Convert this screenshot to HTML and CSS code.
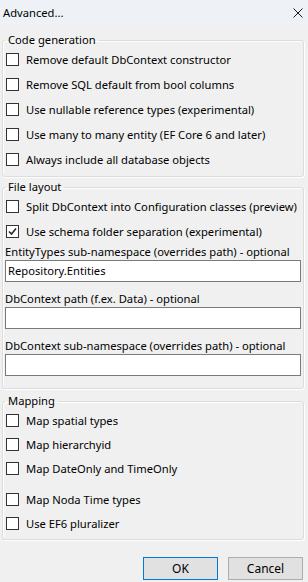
FILE: index.html
```html
<!DOCTYPE html>
<html>
<head>
<meta charset="utf-8">
<title>Advanced...</title>
<link rel="stylesheet" href="styles.css">
</head>
<body>
<div class="window">
  <div class="titlebar">
    <span class="title">Advanced...</span>
    <svg class="close" width="10" height="10" viewBox="0 0 10 10"><path d="M0.5 0.5L9.5 9.5M9.5 0.5L0.5 9.5" stroke="#1a1a1a" stroke-width="1" fill="none"/></svg>
  </div>
  <div class="content">
    <fieldset class="group g1">
      <legend>Code generation</legend>
      <div class="check"><span class="box"></span><span>Remove default DbContext constructor</span></div>
      <div class="check"><span class="box"></span><span>Remove SQL default from bool columns</span></div>
      <div class="check"><span class="box"></span><span>Use nullable reference types (experimental)</span></div>
      <div class="check"><span class="box"></span><span>Use many to many entity (EF Core 6 and later)</span></div>
      <div class="check"><span class="box"></span><span>Always include all database objects</span></div>
    </fieldset>
    <fieldset class="group g2">
      <legend>File layout</legend>
      <div class="check"><span class="box"></span><span>Split DbContext into Configuration classes (preview)</span></div>
      <div class="check"><span class="box"><svg width="11" height="11" viewBox="0 0 11 11"><path d="M2 5.5L4.5 8L9 2.5" stroke="#262626" stroke-width="1.6" fill="none"/></svg></span><span>Use schema folder separation (experimental)</span></div>
      <div class="field-label">EntityTypes sub-namespace (overrides path) - optional</div>
      <div class="textbox">Repository.Entities</div>
      <div class="field-label spaced">DbContext path (f.ex. Data) - optional</div>
      <div class="textbox"></div>
      <div class="field-label spaced">DbContext sub-namespace (overrides path) - optional</div>
      <div class="textbox"></div>
    </fieldset>
    <fieldset class="group g3">
      <legend>Mapping</legend>
      <div class="check small"><span class="box"></span><span>Map spatial types</span></div>
      <div class="check small"><span class="box"></span><span>Map hierarchyid</span></div>
      <div class="check small"><span class="box"></span><span>Map DateOnly and TimeOnly</span></div>
      <div class="check small gap"><span class="box"></span><span>Map Noda Time types</span></div>
      <div class="check small"><span class="box"></span><span>Use EF6 pluralizer</span></div>
    </fieldset>
    <div class="buttons">
      <button class="btn primary">OK</button>
      <button class="btn">Cancel</button>
    </div>
  </div>
</div>
</body>
</html>
```
FILE: styles.css
```css
html, body {
  margin: 0;
  padding: 0;
  background: #f0f0f0;
}

body {
  width: 308px;
  height: 582px;
  overflow: hidden;
  font-family: "Noto Sans", "Open Sans", sans-serif;
  font-size: 11.2px;
  color: #000;
}

.titlebar {
  height: 26px;
  background: #eef2f7;
  display: flex;
  align-items: center;
  justify-content: space-between;
  padding: 0 5px 0 3px;
}

.title {
  line-height: 16px;
}

.close {
  display: block;
}

.content {
  padding: 7px 0 0 2px;
}

.group {
  margin: 0;
  padding: 0 2px 4px 2px;
  width: 302px;
  min-width: 0;
  box-sizing: border-box;
  border: 1px solid #dcdcdc;
  border-radius: 3px;
  box-shadow: 1px 1px 0 #fff, inset 1px 1px 0 #fff;
}

.group legend {
  padding: 0 3px;
  line-height: 14px;
}

.g2 {
  margin-top: 3px;
  padding-bottom: 12px;
}

.g3 {
  margin-top: 5px;
}

.check {
  display: flex;
  align-items: center;
  gap: 7px;
  height: 25px;
  padding-left: 1px;
  white-space: nowrap;
}

.check.small {
  height: 24px;
}

.check.gap {
  margin-top: 7px;
}

.box {
  width: 13px;
  height: 13px;
  box-sizing: border-box;
  border: 1px solid #333;
  background: #fff;
  flex: none;
  display: flex;
  align-items: center;
  justify-content: center;
}

.box svg {
  display: block;
}

.field-label {
  line-height: 16px;
  white-space: nowrap;
}

.field-label.spaced {
  margin-top: 9px;
}

.textbox {
  height: 22px;
  box-sizing: border-box;
  border: 1px solid #7a7a7a;
  background: #fff;
  padding: 0 2px;
  line-height: 20px;
}

.buttons {
  display: flex;
  justify-content: flex-end;
  gap: 10px;
  margin-top: 17px;
  padding-right: 5px;
}

.btn {
  width: 75px;
  height: 23px;
  margin: 0;
  padding: 0;
  box-sizing: border-box;
  border: 1px solid #adadad;
  background: #e1e1e1;
  font-family: inherit;
  font-size: 12px;
  color: #000;
  border-radius: 0;
}

.btn.primary {
  border-color: #0078d7;
}
```
